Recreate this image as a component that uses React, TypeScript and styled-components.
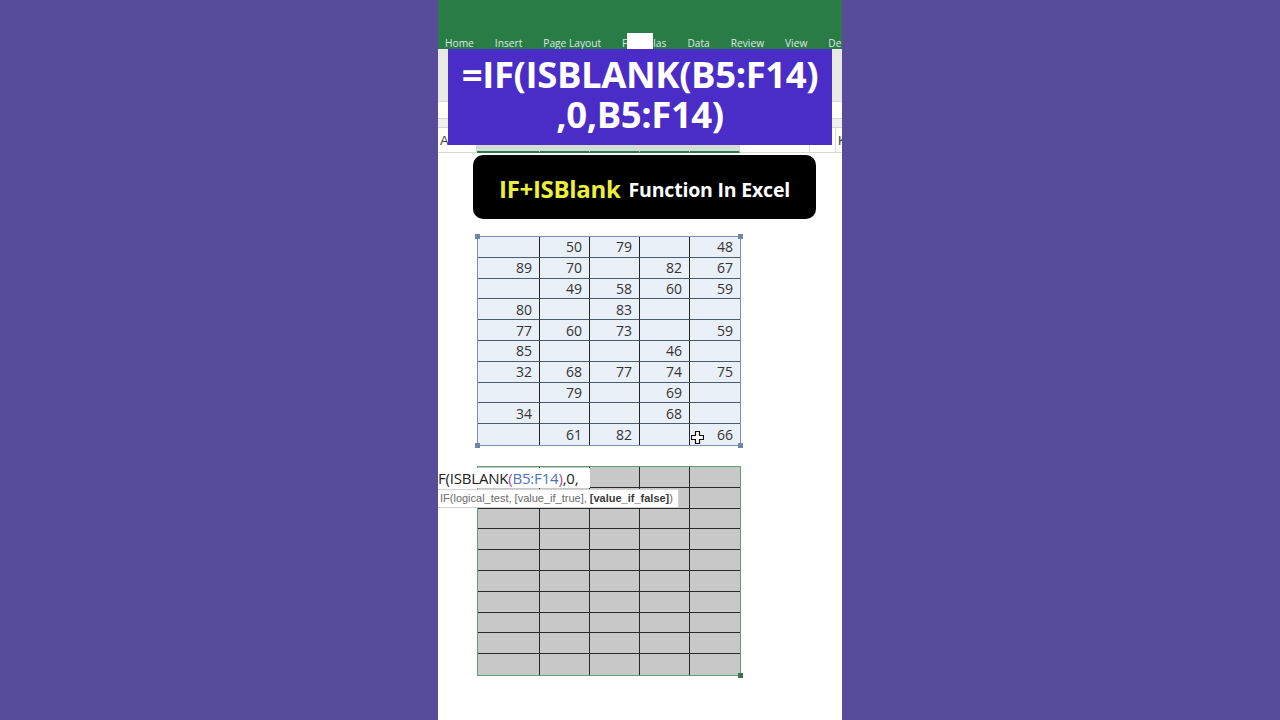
import React from 'react';
import styled, { createGlobalStyle } from 'styled-components';

const Global = createGlobalStyle`
    html, body {
        margin: 0;
        padding: 0;
    }
    body {
        font-family: "Open Sans", sans-serif;
    }
`;

const Page = styled.div`
    display: flex;
    justify-content: center;
    width: 1280px;
    height: 720px;
    background: #574c9a;
`;

const Phone = styled.div`
    position: relative;
    display: flex;
    flex-direction: column;
    width: 404px;
    height: 720px;
    background: #fff;
    overflow: hidden;
`;

const TabBar = styled.div`
    display: flex;
    align-items: flex-end;
    gap: 21px;
    height: 49px;
    padding-left: 7px;
    background: #2a7c47;
    white-space: nowrap;
`;

const Tab = styled.span`
    position: relative;
    font-family: "Open Sans", sans-serif;
    font-size: 10.2px;
    line-height: 10px;
    padding-bottom: 1px;
    color: #dcebe1;
`;

const Blot = styled.span`
    background: #fff;
    color: #fff;
    padding: 3px 0 3px;
`;

const RibbonBody = styled.div`
    height: 52px;
    background: #e9e9e9;
`;

const FormulaBar = styled.div`
    height: 16px;
    background: #fff;
    border-top: 1px solid #d6d6d6;
`;

const Strip = styled.div`
    height: 8px;
    background: #f1f1f1;
    border-top: 1px solid #d6d6d6;
`;

const HeaderRow = styled.div`
    display: flex;
    height: 25px;
    background: #fff;
    border-top: 1px solid #d6d6d6;
`;

const HeaderCell = styled.div<{ $w: number; $on?: boolean; $left?: boolean }>`
    flex: 0 0 ${p => p.$w}px;
    display: flex;
    align-items: center;
    justify-content: ${p => (p.$left ? 'flex-start' : 'center')};
    box-sizing: border-box;
    padding-left: ${p => (p.$left ? '2px' : '0')};
    border-right: 1px solid #d8d8d8;
    border-bottom: ${p => (p.$on ? '2px solid #2a7c47' : '1px solid #d8d8d8')};
    background: ${p => (p.$on ? '#d3dfd6' : '#fff')};
    font-family: "Liberation Sans", sans-serif;
    font-size: 13px;
    color: #444;
`;

const Sheet = styled.div`
    display: flex;
    flex-direction: column;
    flex: 1;
    padding-top: 2px;
`;

const TitleCard = styled.div`
    display: flex;
    align-items: center;
    justify-content: center;
    gap: 8px;
    width: 343px;
    height: 64px;
    margin-left: 35px;
    border-radius: 10px;
    background: #000;
    font-family: "Open Sans", sans-serif;
    font-weight: 700;
`;

const Yellow = styled.span`
    font-size: 24px;
    color: #ecef3a;
    letter-spacing: -0.3px;
    padding-top: 2px;
`;

const White = styled.span`
    font-size: 19.5px;
    color: #fff;
    letter-spacing: -0.2px;
    padding-top: 4px;
`;

const GridFrame = styled.div<{ $frame: string; $top: number }>`
    position: relative;
    width: 264px;
    margin-left: 39px;
    margin-top: ${p => p.$top}px;
    border: 1px solid ${p => p.$frame};
    box-sizing: border-box;
`;

const Grid = styled.div<{ $fill: string; $hline: string }>`
    display: grid;
    grid-template-columns: 62px 50px 50px 50px 50px;
    grid-auto-rows: 20.8px;
    background: ${p => p.$fill};

    & > div {
        border-right: 1px solid #262626;
        border-bottom: 1px solid ${p => p.$hline};
    }
    & > div:nth-child(5n) {
        border-right: none;
    }
    & > div:nth-last-child(-n + 5) {
        border-bottom: none;
    }
`;

const Cell = styled.div`
    box-sizing: border-box;
    display: flex;
    align-items: center;
    justify-content: flex-end;
    padding-right: 7px;
    font-family: "Open Sans", sans-serif;
    font-size: 14px;
    color: #333;
`;

const Handle = styled.span<{ $x: 'left' | 'right'; $y: 'top' | 'bottom'; $c: string }>`
    position: absolute;
    ${p => p.$x}: -3px;
    ${p => p.$y}: -3px;
    width: 5px;
    height: 5px;
    background: ${p => p.$c};
`;

const Cursor = styled.svg`
    position: absolute;
    left: 213px;
    top: 194px;
`;

const Banner = styled.div`
    position: absolute;
    left: 10px;
    top: 49px;
    width: 384px;
    height: 96px;
    box-sizing: border-box;
    padding-top: 5px;
    background: #4a2dc6;
    font-family: "Open Sans", sans-serif;
    font-weight: 700;
    font-size: 36.5px;
    line-height: 40px;
    color: #fff;
    text-align: center;
    letter-spacing: -0.4px;
    white-space: nowrap;
`;

const Editing = styled.div`
    position: absolute;
    left: 0;
    top: 468px;
    width: 152px;
    height: 20px;
    background: #fff;
    font-family: "Open Sans", sans-serif;
    font-size: 15px;
    line-height: 20px;
    letter-spacing: -0.2px;
    color: #222;
    white-space: nowrap;
`;

const Paren = styled.span`
    color: #a2508f;
`;

const Ref = styled.span`
    color: #4b74be;
`;

const Hint = styled.div`
    position: absolute;
    left: 0;
    top: 489px;
    padding: 1px 5px 2px 2px;
    background: #fff;
    border: 1px solid #d2d2d2;
    border-left: none;
    font-family: "Liberation Sans", sans-serif;
    font-size: 11px;
    line-height: 14px;
    color: #6a6a6a;
    white-space: nowrap;

    b {
        color: #3a3a3a;
    }
`;

const data: (number | null)[][] = [
    [null, 50, 79, null, 48],
    [89, 70, null, 82, 67],
    [null, 49, 58, 60, 59],
    [80, null, 83, null, null],
    [77, 60, 73, null, 59],
    [85, null, null, 46, null],
    [32, 68, 77, 74, 75],
    [null, 79, null, 69, null],
    [34, null, null, 68, null],
    [null, 61, 82, null, 66],
];

const tabs = ['Home', 'Insert', 'Page Layout', 'Formulas', 'Data', 'Review', 'View', 'De'];

// column letters B..F sit behind the banner, so only A and K show
const headers: [string, number, boolean][] = [
    ['A', 39, false],
    ['', 63, true],
    ['', 50, true],
    ['', 50, true],
    ['', 50, true],
    ['', 50, true],
    ['', 70, false],
    ['', 26, false],
    ['K', 6, false],
];

function App() {
    return <>
        <Global />
        <Page>
            <Phone>
                <TabBar>
                    {tabs.map(t => t === 'Formulas'
                        ? <Tab key={t}>F<Blot>ormu</Blot>las</Tab>
                        : <Tab key={t}>{t}</Tab>)}
                </TabBar>
                <RibbonBody />
                <FormulaBar />
                <Strip />
                <HeaderRow>
                    {headers.map(([l, w, on], i) =>
                        <HeaderCell key={i} $w={w} $on={on} $left={l !== ''}>{l}</HeaderCell>)}
                </HeaderRow>

                <Sheet>
                    <TitleCard>
                        <Yellow>IF+ISBlank</Yellow>
                        <White>Function In Excel</White>
                    </TitleCard>

                    <GridFrame $frame="#7792b4" $top={17}>
                        <Grid $fill="#eaf0f8" $hline="#4d5c6c">
                            {data.flat().map((v, i) => <Cell key={i}>{v ?? ''}</Cell>)}
                        </Grid>
                        <Handle $x="left" $y="top" $c="#6f87a6" />
                        <Handle $x="right" $y="top" $c="#6f87a6" />
                        <Handle $x="left" $y="bottom" $c="#6f87a6" />
                        <Handle $x="right" $y="bottom" $c="#6f87a6" />
                        <Cursor width="13" height="13" viewBox="0 0 13 13">
                            <path d="M4.5 0.5h4v4h4v4h-4v4h-4v-4h-4v-4h4z" fill="#fff" stroke="#111" strokeWidth="1.2" />
                        </Cursor>
                    </GridFrame>

                    <GridFrame $frame="#5f9c79" $top={20}>
                        <Grid $fill="#c8c8c8" $hline="#2a2a2a">
                            {Array.from({ length: 50 }).map((_, i) => <Cell key={i} />)}
                        </Grid>
                        <Handle $x="right" $y="bottom" $c="#3f6f52" />
                    </GridFrame>
                </Sheet>

                <Banner>
                    =IF(ISBLANK(B5:F14)<br />,0,B5:F14)
                </Banner>

                <Editing>
                    F(ISBLANK<Paren>(</Paren><Ref>B5:F14</Ref><Paren>)</Paren>,0,
                </Editing>
                <Hint>
                    IF(logical_test, [value_if_true], <b>[value_if_false]</b>)
                </Hint>
            </Phone>
        </Page>
    </>;
}

export default App;
